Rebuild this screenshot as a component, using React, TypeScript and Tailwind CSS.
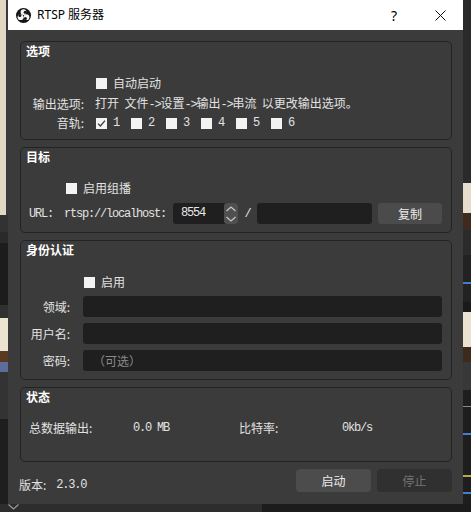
import type { ReactNode } from "react";

const MONO = "font-[family-name:'Liberation_Mono',monospace] text-[12px] tracking-[-1.2px]";

function ObsLogo() {
  const blobs = [-90, 30, 150].map((deg) => {
    const r = (deg * Math.PI) / 180;
    return { x: 7.5 + Math.cos(r) * 3.4, y: 7.5 + Math.sin(r) * 3.4, ix: 7.5 + Math.cos(r + 0.5) * 3.6, iy: 7.5 + Math.sin(r + 0.5) * 3.6 };
  });
  return (
    <svg width="15" height="15" viewBox="0 0 15 15" className="shrink-0">
      <circle cx="7.5" cy="7.5" r="7.5" fill="#151515" />
      {blobs.map((b, i) => (
        <g key={i}>
          <circle cx={b.x} cy={b.y} r="2.9" fill="#f4f4f4" />
          <circle cx={b.ix} cy={b.iy} r="1.5" fill="#151515" />
        </g>
      ))}
    </svg>
  );
}

function Box({ checked = false }: { checked?: boolean }) {
  return (
    <span className="flex h-[11px] w-[11px] shrink-0 items-center justify-center bg-[#f3f3f3]">
      {checked && (
        <svg width="9" height="9" viewBox="0 0 9 9">
          <path d="M1 4.6 L3.4 7 L8 1.6" stroke="#3a3a3a" strokeWidth="1.3" fill="none" />
        </svg>
      )}
    </span>
  );
}

function Group({ title, h, children }: { title: string; h: string; children: ReactNode }) {
  return (
    <section className={`flex flex-col rounded-[5px] border border-[#232323] ${h}`}>
      <div className="mt-px h-4 pl-[5px] text-[12px] leading-4 font-bold text-white">{title}</div>
      {children}
    </section>
  );
}

function Field({ placeholder }: { placeholder?: string }) {
  return (
    <div className="flex h-[21px] flex-1 items-center rounded-[3px] bg-[#1f1f1f] pl-[10px] text-[12px] text-[#8a8a8a]">
      {placeholder}
    </div>
  );
}

function Spinbox({ value }: { value: string }) {
  return (
    <div className="ml-[7px] flex h-[21px] w-[65px] rounded-[3px] bg-[#1f1f1f]">
      <span className={`flex-1 pl-[8px] leading-[21px] text-[#e8e8e8] ${MONO}`}>{value}</span>
      <span className="flex w-[14px] flex-col justify-center gap-[2px] rounded-[3px] bg-[#4f4f4f]">
        <svg width="14" height="8" viewBox="0 0 14 8">
          <path d="M2.5 6 L7 2 L11.5 6" stroke="#c8c8c8" strokeWidth="1.2" fill="none" />
        </svg>
        <svg width="14" height="8" viewBox="0 0 14 8">
          <path d="M2.5 2 L7 6 L11.5 2" stroke="#c8c8c8" strokeWidth="1.2" fill="none" />
        </svg>
      </span>
    </div>
  );
}

function Strip({ parts }: { parts: [string, string][] }) {
  return (
    <div className="flex w-[8px] flex-col">
      {parts.map(([h, c], i) => (
        <div key={i} className={`${h} ${c}`} />
      ))}
    </div>
  );
}

export default function App() {
  return (
    <div className="flex h-[512px] w-[471px] flex-col overflow-hidden bg-[#2b2b2b] font-[family-name:'Noto_Sans_CJK_SC',sans-serif] text-[12px] text-[#e2e2e2]">
      <div className="flex h-[504px]">
        <Strip
          parts={[
            ["h-[215px]", "bg-[#e3d8c4] border-r-2 border-[#3a3a3a]"],
            ["h-[17px]", "bg-[#323232]"],
            ["h-[11px]", "bg-[#2a2a2a]"],
            ["h-[62px]", "bg-[#1c1c1c]"],
            ["h-[13px]", "bg-[#303030]"],
            ["h-[33px]", "bg-[#ece3d2]"],
            ["h-[11px]", "bg-[#5a3b22]"],
            ["h-[10px]", "bg-[#5b6d9c]"],
            ["h-[47px]", "bg-[#333333]"],
            ["h-[85px]", "bg-[#1e1e1e]"],
          ]}
        />

        <div className="flex w-[455px] flex-col">
          <header className="flex h-[31px] items-center bg-white pl-[8px] text-black">
            <ObsLogo />
            <span className="ml-[6px] flex-1 font-[family-name:'Noto_Sans','Noto_Sans_CJK_SC',sans-serif] text-[12px]">
              RTSP 服务器
            </span>
            <span className="w-[46px] text-center font-[family-name:'Noto_Sans',sans-serif] text-[14px]">?</span>
            <span className="flex w-[46px] justify-center">
              <svg width="11" height="11" viewBox="0 0 11 11">
                <path d="M0.5 0.5 L10.5 10.5 M10.5 0.5 L0.5 10.5" stroke="#111" strokeWidth="1" />
              </svg>
            </span>
          </header>

          <div className="flex flex-1 flex-col gap-[7px] bg-[#3b3b3b] pt-[11px] pr-[11px] pb-[11px] pl-[12px]">
            <Group title="选项" h="h-[99px]">
              <div className="mt-[16px] flex h-4 items-center pl-[75px]">
                <Box />
                <span className="ml-[6px]">自动启动</span>
              </div>
              <div className="mt-[5px] flex h-4 items-center">
                <span className="w-[63px] text-right">输出选项:</span>
                <span className="ml-[11px] whitespace-pre">
                  {"打开  文件"}
                  <span className={MONO}>-&gt;</span>设置<span className={MONO}>-&gt;</span>输出
                  <span className={MONO}>-&gt;</span>
                  {"串流  以更改输出选项。"}
                </span>
              </div>
              <div className="mt-[3px] flex h-4 items-center">
                <span className="w-[63px] text-right">音轨:</span>
                <div className="ml-[12px] flex">
                  {[1, 2, 3, 4, 5, 6].map((n) => (
                    <div key={n} className="flex w-[35px] items-center">
                      <Box checked={n === 1} />
                      <span className={`ml-[6px] ${MONO}`}>{n}</span>
                    </div>
                  ))}
                </div>
              </div>
            </Group>

            <Group title="目标" h="h-[86px]">
              <div className="mt-[15px] flex h-4 items-center pl-[45px]">
                <Box />
                <span className="ml-[6px]">启用组播</span>
              </div>
              <div className="mt-[7px] flex items-center">
                <span className={`w-[32px] text-right ${MONO}`}>URL:</span>
                <span className={`ml-[11px] w-[102px] ${MONO}`}>rtsp://localhost:</span>
                <Spinbox value="8554" />
                <span className={`w-[19px] text-center ${MONO}`}>/</span>
                <div className="h-[21px] w-[115px] rounded-[3px] bg-[#1f1f1f]" />
                <button className="ml-[6px] h-[21px] w-[64px] rounded-[3px] bg-[#4b4b4b] text-[12px] text-[#ececec]">
                  复制
                </button>
              </div>
            </Group>

            <Group title="身份认证" h="h-[140px]">
              <div className="mt-[16px] flex h-4 items-center pl-[63px]">
                <Box />
                <span className="ml-[6px]">启用</span>
              </div>
              <div className="mt-[6px] flex flex-col gap-[6px] pr-[9px]">
                {[
                  ["领域:", ""],
                  ["用户名:", ""],
                  ["密码:", "（可选）"],
                ].map(([label, hint]) => (
                  <div key={label} className="flex items-center">
                    <span className="w-[49px] text-right">{label}</span>
                    <span className="w-[13px]" />
                    <Field placeholder={hint} />
                  </div>
                ))}
              </div>
            </Group>

            <Group title="状态" h="h-[75px]">
              <div className="mt-[14px] grid h-4 grid-cols-[104px_106px_103px_1fr] items-center pl-[8px]">
                <span>总数据输出:</span>
                <span className={MONO}>0.0 MB</span>
                <span>比特率:</span>
                <span className={MONO}>0kb/s</span>
              </div>
            </Group>

            <div className="flex items-start">
              <span className="mt-[8px] -ml-px leading-4">版本:</span>
              <span className={`mt-[8px] ml-[10px] flex-1 leading-4 ${MONO}`}>2.3.0</span>
              <button className="h-[23px] w-[75px] rounded-[4px] bg-[#4c4c4c] text-[12px] text-[#ececec]">启动</button>
              <button className="ml-[6px] h-[23px] w-[75px] rounded-[4px] bg-[#303030] text-[12px] text-[#747474]">
                停止
              </button>
            </div>
          </div>
        </div>

        <Strip
          parts={[
            ["h-[183px]", "bg-[#2a2a2a]"],
            ["h-[30px]", "bg-[#e6ddcc]"],
            ["h-[17px]", "bg-[#3d2b1f]"],
            ["h-[25px]", "bg-[#2b2b2b]"],
            ["h-[27px]", "bg-[#222222]"],
            ["h-[2px]", "bg-[#3f7fd0]"],
            ["h-[18px]", "bg-[#222222]"],
            ["h-[10px]", "bg-[#1a1a1a]"],
            ["h-[35px]", "bg-[#ebe2d0]"],
            ["h-[15px]", "bg-[#3c2a1c]"],
            ["h-[28px]", "bg-[#383838]"],
            ["h-[16px]", "bg-[#1e1e1e]"],
            ["h-px", "bg-[#8a8a8a]"],
            ["h-[26px]", "bg-[#1e1e1e]"],
            ["h-[2px]", "bg-[#3f7fd0]"],
            ["h-[40px]", "bg-[#1e1e1e]"],
            ["h-[2px]", "bg-[#b9a84a]"],
            ["h-[15px]", "bg-[#1e1e1e]"],
            ["h-[2px]", "bg-[#3f7fd0]"],
            ["h-[10px]", "bg-[#1e1e1e]"],
          ]}
        />
      </div>

      <div className="flex h-[8px]">
        <div className="flex w-[262px] items-start bg-[#2d2d2d] pl-[8px]">
          <svg width="11" height="6" viewBox="0 0 11 6">
            <path d="M0.5 0.5 L5.5 5 L10.5 0.5" stroke="#9a9a9a" strokeWidth="1.2" fill="none" />
          </svg>
        </div>
        <div className="flex-1 bg-[#1c1c1c]" />
      </div>
    </div>
  );
}
